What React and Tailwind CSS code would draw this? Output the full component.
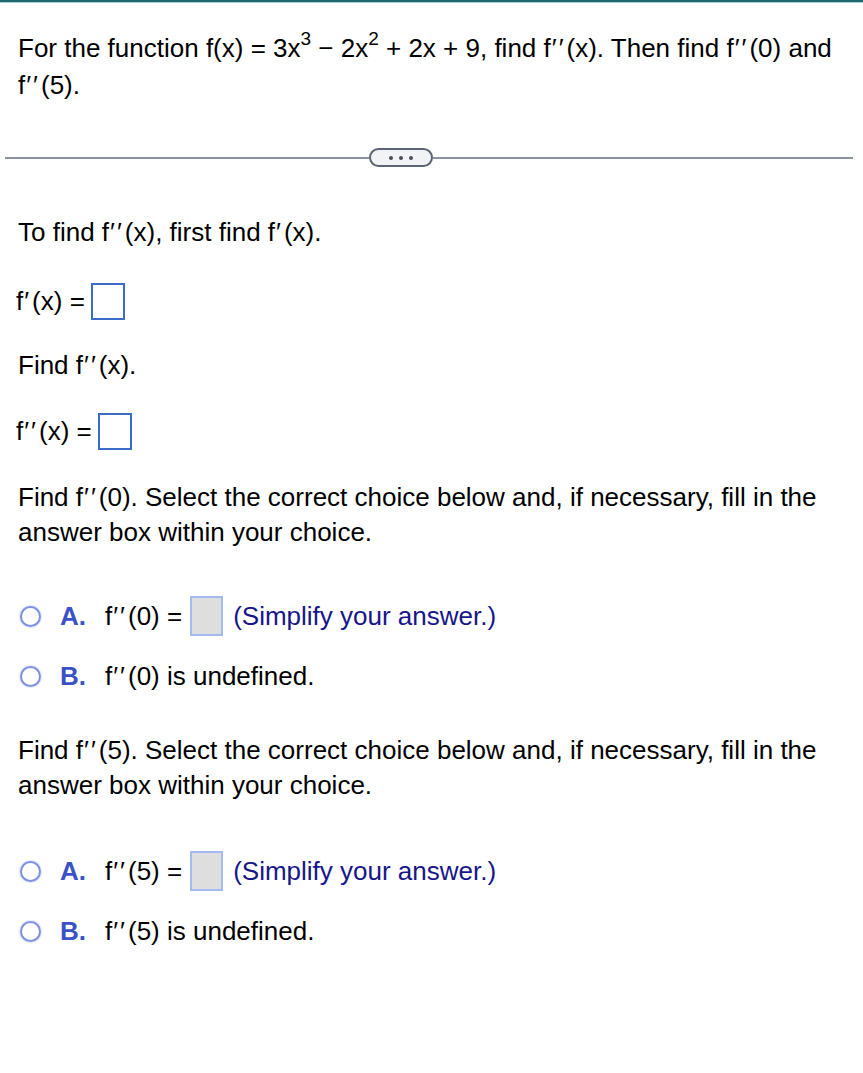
import React from "react";

function Pr({ n = 1 }) {
  return (
    <span className="inline-block tracking-[2px] ml-[1px] mr-[1px]">
      {"\u2032".repeat(n)}
    </span>
  );
}

function Box({ grey }) {
  return grey ? (
    <span className="inline-block align-middle w-[33px] h-[40px] bg-[#dedede] border-2 border-[#a3bbef] ml-[8px] mr-[10px]" />
  ) : (
    <span className="inline-block align-middle w-[34px] h-[37px] bg-white border-2 border-[#3b6cc9] ml-[6px]" />
  );
}

function Radio() {
  return (
    <span className="inline-block w-[21px] h-[21px] rounded-full border-[2.5px] border-[#7f90e0] shadow-[0_0_2px_#9aa8ec]" />
  );
}

function Option({ letter, children }) {
  return (
    <div className="flex items-center h-[40px]">
      <span className="w-[60px] pl-[20px] flex items-center"><Radio /></span>
      <span className="w-[45px] font-bold text-[#3b52c4]">{letter}.</span>
      <span className="flex items-center">{children}</span>
    </div>
  );
}

export default function App() {
  return (
    <div className="w-[863px] h-[1073px] bg-white text-black text-[26px] font-['Liberation_Sans',Arial,sans-serif]">
      <div className="h-[2px] bg-[#1d6a6f]" />
      <div className="h-[1px] bg-[#a9cfd1]" />
      <p className="mt-[27px] px-[18px] leading-[37px] text-[26px]">
        For the function f(x) = 3x<sup className="text-[19px] relative top-[-12px]">3</sup> − 2x<sup className="text-[19px] relative top-[-12px]">2</sup> + 2x + 9, find f<Pr n={2} />(x). Then find f<Pr n={2} />(0) and f<Pr n={2} />(5).
      </p>
      <div className="mt-[44px] flex items-center pl-[5px] pr-[10px]">
        <div className="w-[364px] h-[2px] bg-[#8892a0]" />
        <div className="w-[64px] h-[19px] rounded-full border-2 border-[#5b6470] bg-[#f2f3f6] flex items-center justify-center gap-[6px]">
          <span className="w-[4px] h-[4px] rounded-full bg-[#4a4f57]" />
          <span className="w-[4px] h-[4px] rounded-full bg-[#4a4f57]" />
          <span className="w-[4px] h-[4px] rounded-full bg-[#4a4f57]" />
        </div>
        <div className="flex-1 h-[2px] bg-[#8892a0]" />
      </div>
      <div className="px-[18px]">
        <p className="mt-[48px] leading-[35px]">To find f<Pr n={2} />(x), first find f<Pr />(x).</p>
        <div className="mt-[33px] flex items-center h-[37px] -ml-[2px]">
          <span>f<Pr />(x) =</span>
          <Box />
        </div>
        <p className="mt-[28px] leading-[35px]">Find f<Pr n={2} />(x).</p>
        <div className="mt-[30px] flex items-center h-[37px] -ml-[2px]">
          <span>f<Pr n={2} />(x) =</span>
          <Box />
        </div>
        <p className="mt-[30px] leading-[35px]">
          Find f<Pr n={2} />(0). Select the correct choice below and, if necessary, fill in the answer box within your choice.
        </p>
      </div>
      <div className="mt-[46px]">
        <Option letter="A">
          <span>f<Pr n={2} />(0) =</span>
          <Box grey />
          <span className="text-[#16168a]">(Simplify your answer.)</span>
        </Option>
        <div className="mt-[20px]">
          <Option letter="B">
            <span>f<Pr n={2} />(0) is undefined.</span>
          </Option>
        </div>
      </div>
      <div className="px-[18px]">
        <p className="mt-[37px] leading-[35px]">
          Find f<Pr n={2} />(5). Select the correct choice below and, if necessary, fill in the answer box within your choice.
        </p>
      </div>
      <div className="mt-[48px]">
        <Option letter="A">
          <span>f<Pr n={2} />(5) =</span>
          <Box grey />
          <span className="text-[#16168a]">(Simplify your answer.)</span>
        </Option>
        <div className="mt-[20px]">
          <Option letter="B">
            <span>f<Pr n={2} />(5) is undefined.</span>
          </Option>
        </div>
      </div>
    </div>
  );
}
